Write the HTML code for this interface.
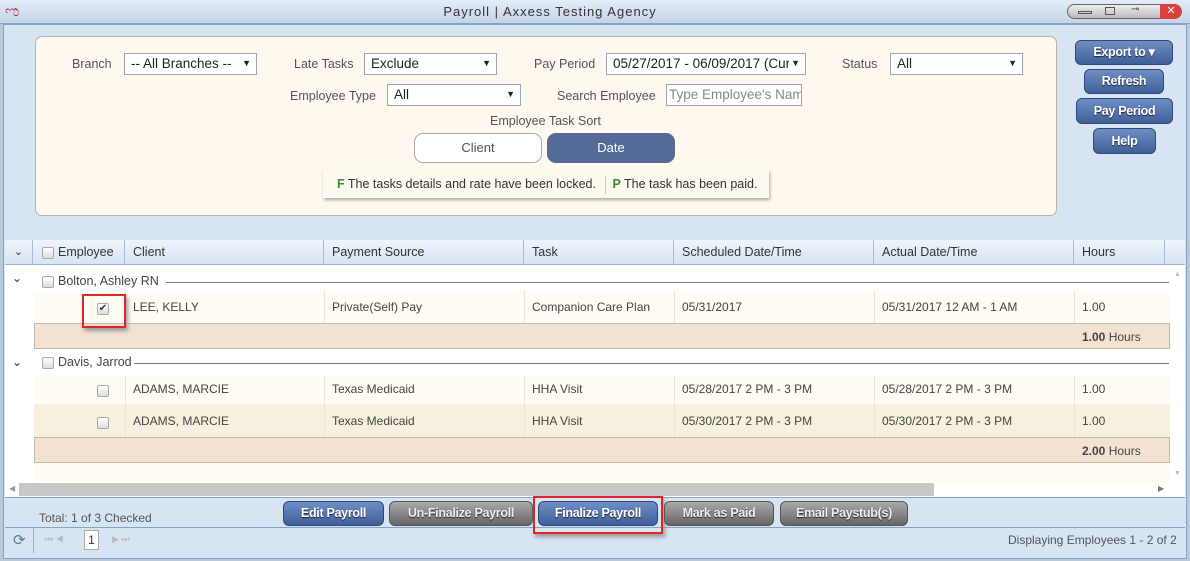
<!DOCTYPE html>
<html><head><meta charset="utf-8"><style>
*{box-sizing:border-box;margin:0;padding:0}
body{width:1190px;height:561px;overflow:hidden;background:#b9c9dc;font-family:"Liberation Sans",sans-serif;font-size:12px;color:#333;position:relative}
.a{position:absolute}
.title{left:0;top:0;width:1190px;height:24px;background:linear-gradient(#e4edf8,#c3d4e9);border-bottom:1px solid #8aa2c2}
.win{left:3px;top:24px;width:1184px;height:535px;background:#d6e4f3;border:1px solid #8aa2c2}
.lbl{font-size:12.5px;color:#555}
.sel{background:#fff;border:1px solid #9aa3bf;height:22px;font-size:13.5px;color:#222;padding:2px 6px;white-space:nowrap;overflow:hidden}
.dd:after{content:"▼";position:absolute;right:5px;top:4px;font-size:9px;background:#fff;padding-left:2px}
.btn{border-radius:6px;color:#fff;font-weight:bold;font-size:12.5px;text-align:center;text-shadow:0 1px 1px #223;letter-spacing:-0.3px}
.blue{background:linear-gradient(#6d8fc4,#3f5f98);border:1px solid #2f4a7a}
.gray{background:linear-gradient(#a9a9a9,#666);border:1px solid #555;color:#eee}
.hd{top:240px;height:25px;background:linear-gradient(#eef4fb,#d7e4f3);border-bottom:1px solid #9db4d6;border-right:1px solid #a7bcda;padding:5px 8px;font-size:12.5px;color:#333}
.cell{font-size:12px;color:#444;padding-left:8px}
.cb{width:12px;height:12px;border:1px solid #aaa;border-radius:2px;background:linear-gradient(#fff,#ddd)}
.vl{width:1px;background:#ece5d5}
</style></head><body>
<div class="a title"></div>
<div class="a" style="left:5px;top:3px;font-size:15px;color:#b01e2c">ಌ</div>
<div class="a" style="left:0;width:1100px;top:4px;text-align:center;font-size:13px;letter-spacing:1px;color:#333">Payroll | Axxess Testing Agency</div>
<div class="a" style="left:1067px;top:4px;width:114px;height:15px;border-radius:8px;background:linear-gradient(#eee,#bbb);border:1px solid #666"></div>
<div class="a" style="left:1160px;top:4px;width:22px;height:15px;border-radius:0 8px 8px 0;background:#d8423a;color:#fff;font-size:11px;text-align:center;line-height:14px">✕</div>
<div class="a" style="left:1078px;top:11px;width:14px;height:3px;border:1px solid #555"></div>
<div class="a" style="left:1105px;top:7px;width:10px;height:8px;border:1px solid #555"></div>
<div class="a" style="left:1131px;top:4px;font-size:10px;color:#444">⊸</div>
<div class="a win"></div>
<div class="a" style="left:35px;top:36px;width:1022px;height:180px;background:#fef8ee;border:1px solid #b8b4a4;border-radius:7px"></div>
<div class="a lbl" style="left:72px;top:57px">Branch</div>
<div class="a sel dd" style="left:124px;top:53px;width:133px">-- All Branches --</div>
<div class="a lbl" style="left:294px;top:57px">Late Tasks</div>
<div class="a sel dd" style="left:364px;top:53px;width:133px">Exclude</div>
<div class="a lbl" style="left:534px;top:57px">Pay Period</div>
<div class="a sel dd" style="left:606px;top:53px;width:200px">05/27/2017 - 06/09/2017 (Curr</div>
<div class="a lbl" style="left:842px;top:57px">Status</div>
<div class="a sel dd" style="left:890px;top:53px;width:133px">All</div>
<div class="a lbl" style="left:290px;top:89px">Employee Type</div>
<div class="a sel dd" style="left:387px;top:84px;width:134px">All</div>
<div class="a lbl" style="left:557px;top:89px">Search Employee</div>
<div class="a sel" style="left:666px;top:84px;width:136px;color:#888;padding-left:2px">Type Employee's Name</div>
<div class="a lbl" style="left:490px;top:114px">Employee Task Sort</div>
<div class="a" style="left:414px;top:133px;width:128px;height:30px;border:1px solid #aaa;border-radius:9px;background:#fff;text-align:center;line-height:28px;font-size:13px;color:#555">Client</div>
<div class="a" style="left:547px;top:133px;width:128px;height:30px;border-radius:9px;background:#536b96;text-align:center;line-height:30px;font-size:13px;color:#fff">Date</div>
<div class="a" style="left:323px;top:170px;width:446px;height:28px;background:#fdf9ef;box-shadow:1px 2px 3px #aaa;font-size:12.5px;line-height:28px;padding-left:14px;color:#333"><b style="color:#3a8a3a">F</b> The tasks details and rate have been locked. <span style="display:inline-block;width:1px;height:18px;background:#ccc;vertical-align:middle;margin:0 6px"></span><b style="color:#3a8a3a">P</b> The task has been paid.</div>
<div class="a btn blue" style="left:1075px;top:40px;width:98px;height:25px;line-height:23px">Export to ▾</div>
<div class="a btn blue" style="left:1084px;top:69px;width:80px;height:25px;line-height:23px">Refresh</div>
<div class="a btn blue" style="left:1076px;top:98px;width:97px;height:26px;line-height:24px">Pay Period</div>
<div class="a btn blue" style="left:1093px;top:128px;width:63px;height:26px;line-height:24px">Help</div>
<div class="a" style="left:5px;top:240px;width:1180px;height:257px;background:#fffcf3;border-top:1px solid #9db4d6"></div>
<div class="a hd" style="left:5px;width:28px;text-align:center;font-size:11px">⌄</div>
<div class="a hd" style="left:33px;width:92px;padding-left:25px">Employee</div>
<div class="a cb" style="left:42px;top:247px"></div>
<div class="a hd" style="left:125px;width:199px">Client</div>
<div class="a hd" style="left:324px;width:200px">Payment Source</div>
<div class="a hd" style="left:524px;width:150px">Task</div>
<div class="a hd" style="left:674px;width:200px">Scheduled Date/Time</div>
<div class="a hd" style="left:874px;width:200px">Actual Date/Time</div>
<div class="a hd" style="left:1074px;width:91px">Hours</div>
<div class="a hd" style="left:1165px;width:20px;border-right:none"></div>
<div class="a" style="left:5px;top:265px;width:1165px;height:26px;background:#fff"></div>
<div class="a" style="left:5px;top:349px;width:1165px;height:27px;background:#fff"></div>
<div class="a" style="left:5px;top:463px;width:1165px;height:19px;background:#fffcf3"></div>
<div class="a" style="left:5px;top:265px;width:29px;height:217px;background:#fff"></div>
<div class="a" style="left:12px;top:271px;font-size:12px;color:#333">⌄</div>
<div class="a" style="left:12px;top:355px;font-size:12px;color:#333">⌄</div>
<div class="a cb" style="left:42px;top:276px"></div>
<div class="a" style="left:58px;top:274px;font-size:12.5px;color:#444">Bolton, Ashley RN</div>
<div class="a" style="left:166px;top:282px;width:1003px;height:1px;background:#777"></div>
<div class="a cb" style="left:42px;top:357px"></div>
<div class="a" style="left:58px;top:355px;font-size:12.5px;color:#444">Davis, Jarrod</div>
<div class="a" style="left:134px;top:363px;width:1035px;height:1px;background:#777"></div>
<div class="a" style="left:34px;top:404px;width:1136px;height:33px;background:#f7f0df"></div>
<div class="a" style="left:34px;top:323px;width:1136px;height:26px;background:#f3e2d2;border:1px solid #c8b8a8"></div>
<div class="a" style="left:34px;top:437px;width:1136px;height:26px;background:#f3e2d2;border:1px solid #c8b8a8"></div>
<div class="a" style="left:1082px;top:330px;font-size:12px;color:#444"><b>1.00</b> Hours</div>
<div class="a" style="left:1082px;top:444px;font-size:12px;color:#444"><b>2.00</b> Hours</div>
<div class="a vl" style="left:125px;top:291px;height:32px"></div><div class="a vl" style="left:324px;top:291px;height:32px"></div><div class="a vl" style="left:524px;top:291px;height:32px"></div><div class="a vl" style="left:674px;top:291px;height:32px"></div><div class="a vl" style="left:874px;top:291px;height:32px"></div><div class="a vl" style="left:1074px;top:291px;height:32px"></div>
<div class="a vl" style="left:125px;top:376px;height:61px"></div><div class="a vl" style="left:324px;top:376px;height:61px"></div><div class="a vl" style="left:524px;top:376px;height:61px"></div><div class="a vl" style="left:674px;top:376px;height:61px"></div><div class="a vl" style="left:874px;top:376px;height:61px"></div><div class="a vl" style="left:1074px;top:376px;height:61px"></div>
<div class="a" style="left:82px;top:294px;width:44px;height:34px;border:2px solid #e0262a;box-shadow:2px 3px 4px #999"></div>
<div class="a cb" style="left:97px;top:303px;font-size:10px;line-height:10px;text-align:center;color:#333">✔</div>
<div class="a cb" style="left:97px;top:385px"></div>
<div class="a cb" style="left:97px;top:417px"></div>
<div class="a cell" style="left:125px;top:300px">LEE, KELLY</div>
<div class="a cell" style="left:324px;top:300px">Private(Self) Pay</div>
<div class="a cell" style="left:524px;top:300px">Companion Care Plan</div>
<div class="a cell" style="left:674px;top:300px">05/31/2017</div>
<div class="a cell" style="left:874px;top:300px">05/31/2017 12 AM - 1 AM</div>
<div class="a cell" style="left:1074px;top:300px">1.00</div>
<div class="a cell" style="left:125px;top:382px">ADAMS, MARCIE</div>
<div class="a cell" style="left:324px;top:382px">Texas Medicaid</div>
<div class="a cell" style="left:524px;top:382px">HHA Visit</div>
<div class="a cell" style="left:674px;top:382px">05/28/2017 2 PM - 3 PM</div>
<div class="a cell" style="left:874px;top:382px">05/28/2017 2 PM - 3 PM</div>
<div class="a cell" style="left:1074px;top:382px">1.00</div>
<div class="a cell" style="left:125px;top:414px">ADAMS, MARCIE</div>
<div class="a cell" style="left:324px;top:414px">Texas Medicaid</div>
<div class="a cell" style="left:524px;top:414px">HHA Visit</div>
<div class="a cell" style="left:674px;top:414px">05/30/2017 2 PM - 3 PM</div>
<div class="a cell" style="left:874px;top:414px">05/30/2017 2 PM - 3 PM</div>
<div class="a cell" style="left:1074px;top:414px">1.00</div>
<div class="a" style="left:1170px;top:265px;width:15px;height:217px;background:#fff;color:#bbb;font-size:7px;text-align:center;padding-top:6px">▲<div style="margin-top:192px">▼</div></div>
<div class="a" style="left:5px;top:482px;width:1180px;height:15px;background:#fff"></div>
<div class="a" style="left:19px;top:483px;width:915px;height:13px;background:#c8c8c8"></div>
<div class="a" style="left:9px;top:484px;font-size:8px;color:#999">◀</div>
<div class="a" style="left:1158px;top:484px;font-size:8px;color:#777">▶</div>
<div class="a" style="left:5px;top:497px;width:1180px;height:31px;background:#d6e4f3;border-top:1px solid #8aa2c2;border-bottom:1px solid #8aa2c2"></div>
<div class="a" style="left:39px;top:511px;font-size:12px;color:#555">Total: 1 of 3 Checked</div>
<div class="a btn blue" style="left:283px;top:501px;width:101px;height:25px;line-height:23px">Edit Payroll</div>
<div class="a btn gray" style="left:389px;top:501px;width:144px;height:25px;line-height:23px">Un-Finalize Payroll</div>
<div class="a" style="left:533px;top:496px;width:130px;height:38px;border:2px solid #e0262a;box-shadow:2px 3px 4px #999"></div>
<div class="a btn blue" style="left:538px;top:501px;width:120px;height:25px;line-height:23px">Finalize Payroll</div>
<div class="a btn gray" style="left:664px;top:501px;width:110px;height:25px;line-height:23px">Mark as Paid</div>
<div class="a btn gray" style="left:780px;top:501px;width:128px;height:25px;line-height:23px">Email Paystub(s)</div>
<div class="a" style="left:13px;top:531px;font-size:15px;color:#5577aa">⟳</div>
<div class="a" style="left:33px;top:528px;width:1px;height:25px;background:#9db4d6"></div>
<div class="a" style="left:45px;top:534px;font-size:9px;color:#bbb">⏮ ◀</div>
<div class="a" style="left:84px;top:530px;width:15px;height:20px;background:#fff;border:1px solid #aaa;text-align:center;font-size:12px;line-height:18px">1</div>
<div class="a" style="left:112px;top:534px;font-size:9px;color:#bbb">▶ ⏭</div>
<div class="a" style="left:1008px;top:533px;font-size:12px;color:#555">Displaying Employees 1 - 2 of 2</div>
</body></html>
